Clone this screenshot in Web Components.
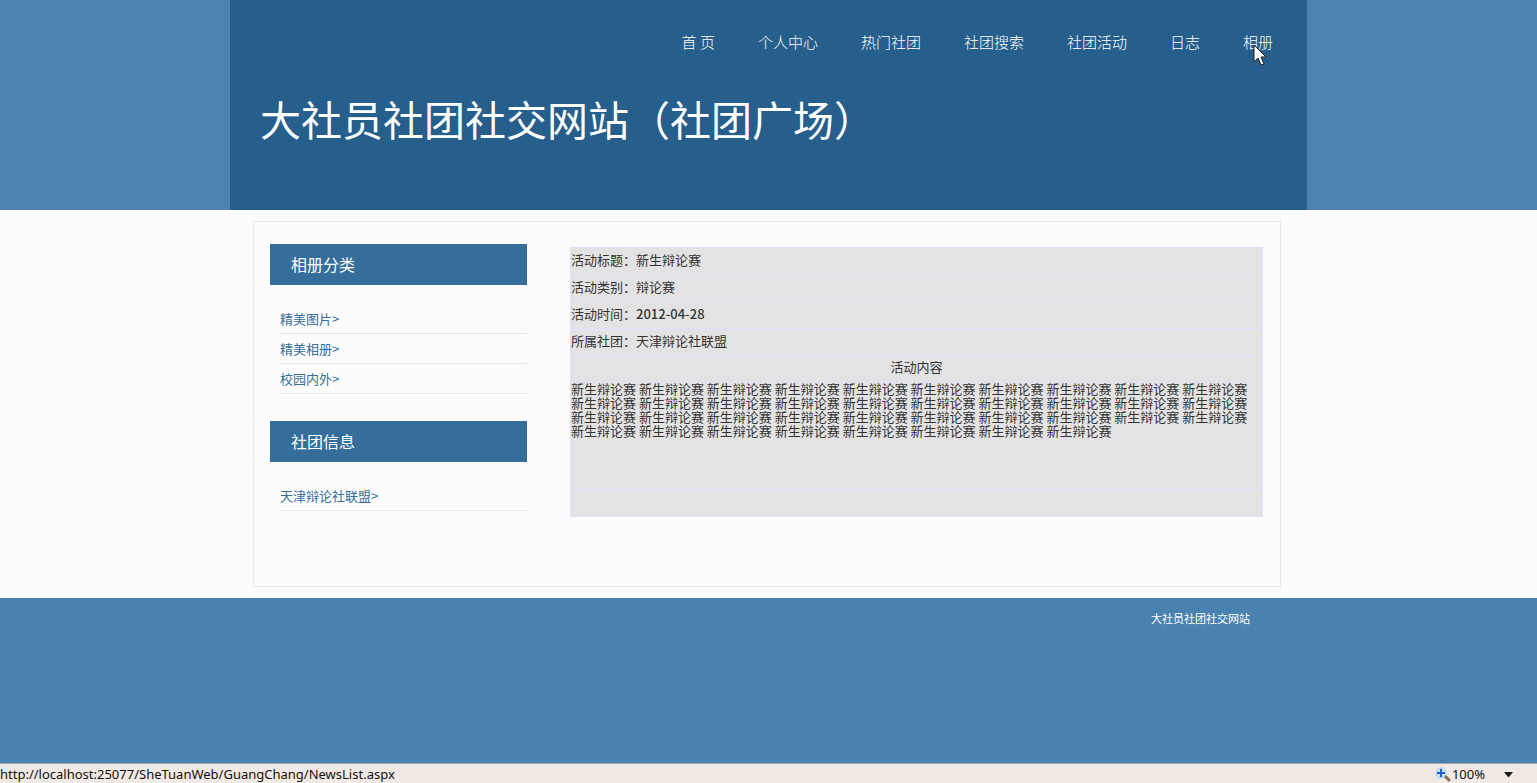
<!DOCTYPE html>
<html lang="zh-CN">
<head>
  <meta charset="utf-8">
  <meta name="viewport" content="width=device-width, initial-scale=1">
  <title>大社员社团社交网站</title>
  <style>
    body {
      --page-width: 1077px;
      margin: 0;
      min-height: 100vh;
      display: flex;
      flex-direction: column;
      background: #fcfcfc;
      color: #333;
      font-family: "Noto Sans CJK SC", sans-serif;
      font-size: 13px;
    }
  </style>
</head>
<body>
  <page-header>
    <site-nav slot="nav">
      <nav-item>首 页</nav-item>
      <nav-item>个人中心</nav-item>
      <nav-item>热门社团</nav-item>
      <nav-item>社团搜索</nav-item>
      <nav-item>社团活动</nav-item>
      <nav-item>日志</nav-item>
      <nav-item pointed>相册</nav-item>
    </site-nav>
    大社员社团社交网站（社团广场）
  </page-header>

  <page-content>
    <side-panel slot="side">
      <span slot="title">相册分类</span>
      <side-link>精美图片&gt;</side-link>
      <side-link>精美相册&gt;</side-link>
      <side-link>校园内外&gt;</side-link>
    </side-panel>
    <side-panel slot="side">
      <span slot="title">社团信息</span>
      <side-link>天津辩论社联盟&gt;</side-link>
    </side-panel>
    <activity-detail
      data-title="新生辩论赛"
      data-type="辩论赛"
      data-date="2012-04-28"
      data-club="天津辩论社联盟">新生辩论赛 新生辩论赛 新生辩论赛 新生辩论赛 新生辩论赛 新生辩论赛 新生辩论赛 新生辩论赛 新生辩论赛 新生辩论赛 新生辩论赛 新生辩论赛 新生辩论赛 新生辩论赛 新生辩论赛 新生辩论赛 新生辩论赛 新生辩论赛 新生辩论赛 新生辩论赛 新生辩论赛 新生辩论赛 新生辩论赛 新生辩论赛 新生辩论赛 新生辩论赛 新生辩论赛 新生辩论赛 新生辩论赛 新生辩论赛 新生辩论赛 新生辩论赛 新生辩论赛 新生辩论赛 新生辩论赛 新生辩论赛 新生辩论赛 新生辩论赛</activity-detail>
  </page-content>

  <page-footer>大社员社团社交网站</page-footer>
  <status-bar data-zoom="100%">http://localhost:25077/SheTuanWeb/GuangChang/NewsList.aspx</status-bar>

  <script>
    class PageHeader extends HTMLElement {
      constructor() {
        super()
        let shadow = this.attachShadow({ mode: 'open' })
        shadow.innerHTML = `
        <style>
        :host{
            display:block;
            background:#4b82b0;
        }
        header{
            box-sizing:border-box;
            max-width:var(--page-width);
            min-height:210px;
            margin:0 auto;
            padding:30px 34px 0 30px;
            background:#265e8c;
            color:#fff;
        }
        h1{
            margin:34px 0 0;
            font-size:41px;
            line-height:60px;
            font-weight:400;
        }
        </style>
        <header>
          <slot name="nav"></slot>
          <h1><slot></slot></h1>
        </header>
        `
      }
    }

    class SiteNav extends HTMLElement {
      constructor() {
        super()
        let shadow = this.attachShadow({ mode: 'open' })
        shadow.innerHTML = `
        <style>
        :host{
            display:block;
        }
        nav{
            display:flex;
            flex-wrap:wrap;
            justify-content:flex-end;
            gap:0 43px;
        }
        </style>
        <nav><slot></slot></nav>
        `
      }
    }

    class NavItem extends HTMLElement {
      constructor() {
        super()
        this.attachShadow({ mode: 'open' })
      }

      connectedCallback() {
        this.shadowRoot.innerHTML = `
        <style>
        :host{
            display:block;
            position:relative;
            font-size:15px;
            line-height:24px;
            font-weight:300;
        }
        a{
            color:#fff;
            text-decoration:none;
        }
        svg{
            position:absolute;
            left:10px;
            top:14px;
            pointer-events:none;
        }
        </style>
        <a href="#"><slot></slot></a>
        `
        // arrow cursor resting on the current item
        if (this.hasAttribute('pointed')) {
          this.shadowRoot.innerHTML += `
          <svg width="14" height="23" viewBox="0 0 14 23" aria-hidden="true">
            <path d="M1 1v17l4-4 3 7 3-1-3-7h5z" fill="#fff" stroke="#1a2026" stroke-width="1"/>
          </svg>
          `
        }
      }
    }

    class PageContent extends HTMLElement {
      constructor() {
        super()
        let shadow = this.attachShadow({ mode: 'open' })
        shadow.innerHTML = `
        <style>
        :host{
            display:block;
            box-sizing:border-box;
            width:100%;
            max-width:var(--page-width);
            margin:0 auto;
            padding:11px 26px 11px 23px;
        }
        main{
            display:flex;
            gap:43px;
            padding:22px 17px 69px 16px;
            border:1px solid #e3e9ee;
        }
        aside{
            flex:0 0 257px;
            display:flex;
            flex-direction:column;
            gap:27px;
        }
        section{
            flex:1;
            min-width:0;
            padding-top:3px;
        }
        </style>
        <main>
          <aside><slot name="side"></slot></aside>
          <section><slot></slot></section>
        </main>
        `
      }
    }

    class SidePanel extends HTMLElement {
      constructor() {
        super()
        let shadow = this.attachShadow({ mode: 'open' })
        shadow.innerHTML = `
        <style>
        :host{
            display:block;
        }
        h2{
            margin:0;
            padding:0 21px 1px;
            background:#366e9b;
            color:#fff;
            font-size:16px;
            line-height:40px;
            font-weight:400;
        }
        nav{
            padding:19px 0 0 10px;
        }
        </style>
        <h2><slot name="title"></slot></h2>
        <nav><slot></slot></nav>
        `
      }
    }

    class SideLink extends HTMLElement {
      constructor() {
        super()
        let shadow = this.attachShadow({ mode: 'open' })
        shadow.innerHTML = `
        <style>
        :host{
            display:block;
            border-bottom:1px solid #dfe7ed;
            line-height:29px;
        }
        a{
            color:#366e9b;
            text-decoration:none;
        }
        </style>
        <a href="#"><slot></slot></a>
        `
      }
    }

    class ActivityDetail extends HTMLElement {
      constructor() {
        super()
        this.attachShadow({ mode: 'open' })
      }

      connectedCallback() {
        let title = this.getAttribute('data-title'),
          type = this.getAttribute('data-type'),
          date = this.getAttribute('data-date'),
          club = this.getAttribute('data-club')

        this.shadowRoot.innerHTML = `
        <style>
        :host{
            display:block;
        }
        table{
            width:100%;
            border-collapse:collapse;
            background:#e3e3e3;
            border:1px solid #e0e0f8;
        }
        td{
            height:23px;
            padding:0 0 3px;
            border-top:1px solid #e0e0f8;
            line-height:18px;
        }
        .caption{
            height:22px;
            text-align:center;
        }
        .text{
            height:104px;
            vertical-align:top;
            line-height:14px;
        }
        .date{
            font-weight:500;
        }
        </style>
        <table>
          <tr><td>活动标题：${title}</td></tr>
          <tr><td>活动类别：${type}</td></tr>
          <tr><td>活动时间：<span class="date">${date}</span></td></tr>
          <tr><td>所属社团：${club}</td></tr>
          <tr><td class="caption">活动内容</td></tr>
          <tr><td class="text"><slot></slot></td></tr>
          <tr><td></td></tr>
        </table>
        `
      }
    }

    class PageFooter extends HTMLElement {
      constructor() {
        super()
        let shadow = this.attachShadow({ mode: 'open' })
        shadow.innerHTML = `
        <style>
        :host{
            display:block;
            flex:1;
            background:#4a82af;
        }
        footer{
            box-sizing:border-box;
            max-width:var(--page-width);
            margin:0 auto;
            padding:11px 57px;
            color:#fff;
            font-size:11px;
            line-height:18px;
            text-align:right;
        }
        </style>
        <footer><slot></slot></footer>
        `
      }
    }

    class StatusBar extends HTMLElement {
      constructor() {
        super()
        this.attachShadow({ mode: 'open' })
      }

      connectedCallback() {
        let zoom = this.getAttribute('data-zoom')

        this.shadowRoot.innerHTML = `
        <style>
        :host{
            display:flex;
            justify-content:space-between;
            padding:2px 24px 0 0;
            border-top:1px solid #a5a9aa;
            background:#f1eae4;
            color:#111;
            font-family:"Noto Sans", "Noto Sans CJK SC", sans-serif;
            font-size:13px;
            line-height:17px;
        }
        button{
            display:flex;
            align-items:center;
            padding:0;
            border:0;
            background:none;
            color:inherit;
            font:inherit;
        }
        .arrow{
            margin-left:19px;
        }
        </style>
        <span><slot></slot></span>
        <button type="button">
          <svg width="16" height="16" viewBox="0 0 16 16" aria-hidden="true">
            <path d="M9 9l4 4" stroke="#8a6a55" stroke-width="3" stroke-linecap="round"/>
            <circle cx="5" cy="6" r="5" fill="#cfe4f8" stroke="#a9c8e6"/>
            <path d="M5 2v8M1 6h8" stroke="#1c62c4" stroke-width="2"/>
          </svg>
          ${zoom}
          <svg class="arrow" width="9" height="5" viewBox="0 0 9 5" aria-hidden="true">
            <path d="M0 0h9L5 5H4z" fill="#1c1c1c"/>
          </svg>
        </button>
        `
      }
    }

    customElements.define('page-header', PageHeader)
    customElements.define('site-nav', SiteNav)
    customElements.define('nav-item', NavItem)
    customElements.define('page-content', PageContent)
    customElements.define('side-panel', SidePanel)
    customElements.define('side-link', SideLink)
    customElements.define('activity-detail', ActivityDetail)
    customElements.define('page-footer', PageFooter)
    customElements.define('status-bar', StatusBar)
  </script>
</body>
</html>
